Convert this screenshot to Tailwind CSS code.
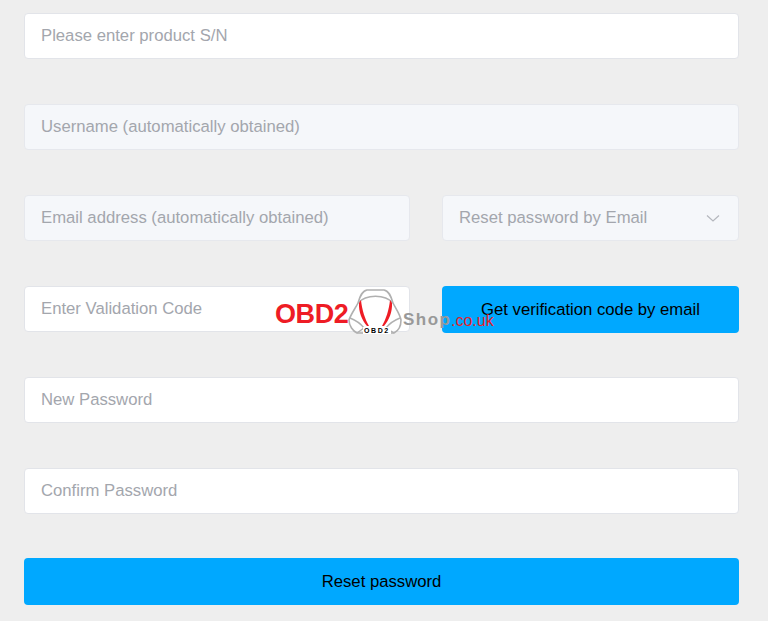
<!DOCTYPE html>
<html>
<head>
<meta charset="utf-8">
<script src="https://cdn.jsdelivr.net/npm/@tailwindcss/browser@4"></script>
</head>
<body class="bg-[#eeeeee] font-['Liberation_Sans',Arial,sans-serif] w-[768px] h-[621px] overflow-hidden relative">
<div class="pl-[24px] pr-[29px] pt-[13px] flex flex-col gap-[45px]">
  <div class="h-[46px] bg-white rounded border border-[#e2e4e9] flex items-center px-[16px] text-[16.7px] text-[#a3a6ad]">Please enter product S/N</div>
  <div class="h-[46px] bg-[#f5f7fa] rounded border border-[#e6e8ed] flex items-center px-[16px] text-[16.7px] text-[#a3a6ad]">Username (automatically obtained)</div>
  <div class="flex gap-[32px]">
    <div class="w-[386px] h-[46px] bg-[#f5f7fa] rounded border border-[#e6e8ed] flex items-center px-[16px] text-[16.7px] text-[#a3a6ad]">Email address (automatically obtained)</div>
    <div class="flex-1 h-[46px] bg-[#f5f7fa] rounded border border-[#e6e8ed] flex items-center justify-between pl-[16px] pr-[18px] text-[16.7px] text-[#a3a6ad]">
      <span>Reset password by Email</span>
      <svg class="w-[14px] h-[14px]" viewBox="0 0 14 14" fill="none" stroke="#b4b7bd" stroke-width="1.2"><path d="M1 4.5 7 10 13 4.5"/></svg>
    </div>
  </div>
  <div class="flex gap-[32px] h-[46px]">
    <div class="w-[386px] h-[46px] bg-white rounded border border-[#e2e4e9] flex items-center px-[16px] text-[16.7px] text-[#a3a6ad]">Enter Validation Code</div>
    <div class="flex-1 h-[47px] bg-[#00a8ff] rounded flex items-center justify-center text-[16.7px] text-black">Get verification code by email</div>
  </div>
  <div class="h-[46px] bg-white rounded border border-[#e2e4e9] flex items-center px-[16px] text-[16.7px] text-[#a3a6ad]">New Password</div>
  <div class="h-[46px] bg-white rounded border border-[#e2e4e9] flex items-center px-[16px] text-[16.7px] text-[#a3a6ad]">Confirm Password</div>
  <div class="h-[47px] -mt-px bg-[#00a8ff] rounded flex items-center justify-center text-[16.7px] text-black">Reset password</div>
</div>

<div class="absolute left-[275px] top-[288px] w-[220px] h-[48px]">
  <span class="absolute left-0 top-[10px] text-[27px] leading-[32px] font-bold text-[#ee1c25] tracking-[-0.4px]">OBD2</span>
  <svg class="absolute left-[73px] top-0 w-[54px] h-[47px]" viewBox="0 0 54 47" fill="none">
    <path d="M10 15 C12 8 14 3 19 2 L36 2 C41 3 43 8 45 15 C48 21 52 26 53 32 C53 38 50 43 46 45 L9 45 C5 43 1 38 1 32 C3 26 7 21 10 15 Z" stroke="#b0b0b0" stroke-width="1.6"/>
    <path d="M10 15 C18 6 37 6 45 15" stroke="#b0b0b0" stroke-width="1.4"/>
    <path d="M2 30 C7 32 13 36 16 40 M52 30 C47 32 41 36 38 40 M9 45 L16 40 L38 40 L46 45" stroke="#b0b0b0" stroke-width="1.4"/>
    <path d="M13 12 C14 22 17 31 21 38 L19 38 C14 32 10.5 24 11 15 Z" fill="#ee1c25"/>
    <path d="M42 12 C41 22 38 31 34 38 L36 38 C41 32 44.5 24 44 15 Z" fill="#ee1c25"/>
  </svg>
  <span class="absolute left-[88px] top-[39px] bg-white px-[1px] text-[7px] leading-[7px] font-bold text-black tracking-[1.6px]">OBD2</span>
  <span class="absolute left-[128px] top-[22px] text-[17px] leading-[20px] font-bold text-[#999999] tracking-[1.5px]">Shop</span>
  <span class="absolute left-[176px] top-[23px] text-[16px] leading-[20px] text-[#e5222a]">.co.uk</span>
</div>
</body>
</html>
